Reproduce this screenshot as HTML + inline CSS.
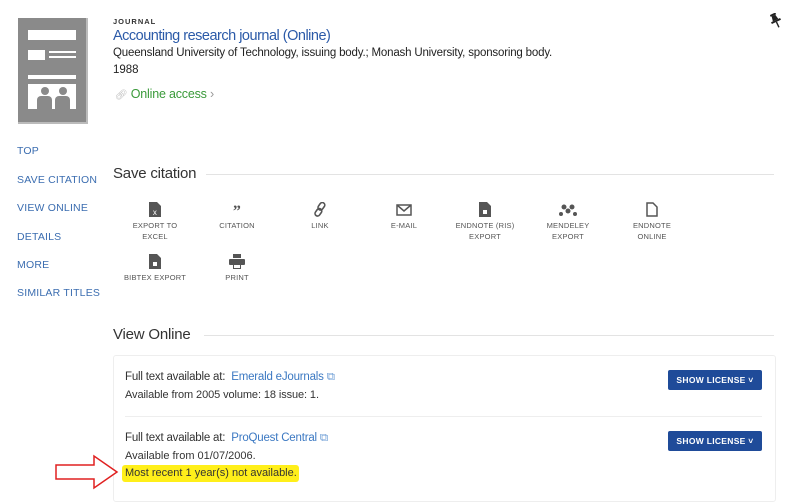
<!DOCTYPE html><html><head><style>
body{margin:0;width:800px;height:493px;background:#fff;font-family:"Liberation Sans",sans-serif;position:relative;overflow:hidden;color:#333}
.a{position:absolute;white-space:nowrap}
.nav{left:17px;font-size:10.5px;color:#3b6db0;letter-spacing:.2px}
.ic{position:absolute;width:80px;text-align:center;font-size:7.5px;color:#555;line-height:11px;letter-spacing:.2px}
.ic svg{display:block;margin:0 auto 3px}
.btn{position:absolute;left:668px;width:94px;height:20px;background:#1f4b99;border-radius:2px;color:#fff;font-size:8.5px;font-weight:bold;line-height:20px;text-align:center;letter-spacing:.3px}
</style></head><body>
<div class="a" style="left:18px;top:18px;width:68px;height:104px;background:#8a8a8a;border-right:2px solid #bbb;border-bottom:2px solid #bbb"></div>
<div class="a" style="left:28px;top:30px;width:48px;height:10px;background:#fff"></div>
<div class="a" style="left:28px;top:50px;width:17px;height:10px;background:#fff"></div>
<div class="a" style="left:49px;top:51px;width:27px;height:2px;background:#fff"></div>
<div class="a" style="left:49px;top:56px;width:27px;height:2px;background:#fff"></div>
<div class="a" style="left:28px;top:75px;width:48px;height:4px;background:#fff"></div>
<div class="a" style="left:28px;top:84px;width:48px;height:25px;background:#fff"></div>
<div class="a" style="left:41px;top:87px;width:8px;height:8px;border-radius:50%;background:#8a8a8a"></div>
<div class="a" style="left:37px;top:96px;width:15px;height:13px;border-radius:4px 4px 0 0;background:#8a8a8a"></div>
<div class="a" style="left:59px;top:87px;width:8px;height:8px;border-radius:50%;background:#8a8a8a"></div>
<div class="a" style="left:55px;top:96px;width:15px;height:13px;border-radius:4px 4px 0 0;background:#8a8a8a"></div>

<div class="a" style="left:113px;top:17px;font-size:7.5px;font-weight:bold;letter-spacing:1px;color:#333">JOURNAL</div>
<div class="a" style="left:113px;top:28px;font-size:14.5px;color:#2b5aa8;letter-spacing:-0.5px">Accounting research journal (Online)</div>
<div class="a" style="left:113px;top:47px;font-size:11.5px;color:#222;letter-spacing:-0.18px">Queensland University of Technology, issuing body.; Monash University, sponsoring body.</div>
<div class="a" style="left:113px;top:64px;font-size:11.5px;color:#222">1988</div>
<div class="a" style="left:115px;top:87px;font-size:12.5px;color:#3a9a3a;letter-spacing:-0.2px"><span style="color:#bbb;font-size:10px">&#x1F517;&#xFE0E;</span> Online access <span style="color:#999">›</span></div>
<svg class="a" style="left:770px;top:13px" width="12" height="16"><g fill="#222" transform="rotate(-25 6 8)"><rect x="3" y="0" width="6" height="2"/><path d="M4 2h4l1 5H3z"/><rect x="1" y="7" width="10" height="2"/><rect x="5.3" y="9" width="1.4" height="6"/></g></svg>

<div class="a nav" style="top:145px">TOP</div>
<div class="a nav" style="top:174px">SAVE CITATION</div>
<div class="a nav" style="top:202px">VIEW ONLINE</div>
<div class="a nav" style="top:231px">DETAILS</div>
<div class="a nav" style="top:259px">MORE</div>
<div class="a nav" style="top:287px">SIMILAR TITLES</div>

<div class="a" style="left:113px;top:165px;font-size:15px;color:#333;letter-spacing:-0.2px">Save citation</div>
<div class="a" style="left:206px;top:174px;width:568px;height:1px;background:#e3e3e3"></div>

<div class="ic" style="left:115px;top:202px"><svg width="12" height="15"><path d="M0 0h8l4 4v11H0z" fill="#555"/><text x="6" y="13" font-size="8" fill="#fff" text-anchor="middle" font-family="Liberation Sans">x</text></svg>EXPORT TO<br>EXCEL</div>
<div class="ic" style="left:197px;top:202px"><svg width="14" height="15"><text x="7" y="14" font-size="16" font-weight="bold" fill="#555" text-anchor="middle" font-family="Liberation Serif">”</text></svg>CITATION</div>
<div class="ic" style="left:280px;top:202px"><svg width="14" height="15"><g fill="none" stroke="#555" stroke-width="1.6"><rect x="6" y="0" width="5" height="8" rx="2.5" transform="rotate(35 8 4)"/><rect x="3" y="6" width="5" height="8" rx="2.5" transform="rotate(35 5 10)"/></g></svg>LINK</div>
<div class="ic" style="left:364px;top:202px"><svg width="16" height="15"><rect x="1" y="3" width="14" height="10" fill="none" stroke="#555" stroke-width="1.5"/><path d="M1 3l7 6 7-6" fill="none" stroke="#555" stroke-width="1.5"/></svg>E-MAIL</div>
<div class="ic" style="left:445px;top:202px"><svg width="12" height="15"><path d="M0 0h8l4 4v11H0z" fill="#555"/><rect x="4" y="8" width="4" height="4" fill="#fff"/></svg>ENDNOTE (RIS)<br>EXPORT</div>
<div class="ic" style="left:528px;top:202px"><svg width="18" height="15"><g fill="#555"><circle cx="5" cy="5" r="2.5"/><circle cx="13" cy="5" r="2.5"/><circle cx="9" cy="9" r="2.5"/><circle cx="2" cy="12" r="2"/><circle cx="16" cy="12" r="2"/></g></svg>MENDELEY<br>EXPORT</div>
<div class="ic" style="left:612px;top:202px"><svg width="12" height="15"><path d="M1 1h6l4 4v9H1z" fill="none" stroke="#555" stroke-width="1.5"/></svg>ENDNOTE<br>ONLINE</div>
<div class="ic" style="left:115px;top:254px"><svg width="12" height="15"><path d="M0 0h8l4 4v11H0z" fill="#555"/><rect x="4" y="8" width="4" height="4" fill="#fff"/></svg>BIBTEX EXPORT</div>
<div class="ic" style="left:197px;top:254px"><svg width="16" height="15"><g fill="#555"><rect x="4" y="0" width="8" height="4"/><rect x="0" y="5" width="16" height="6" rx="1"/><rect x="4" y="10" width="8" height="5"/></g><rect x="5" y="11" width="6" height="3" fill="#fff"/></svg>PRINT</div>

<div class="a" style="left:113px;top:326px;font-size:15px;color:#333;letter-spacing:-0.2px">View Online</div>
<div class="a" style="left:204px;top:335px;width:570px;height:1px;background:#e3e3e3"></div>

<div class="a" style="left:113px;top:355px;width:661px;height:145px;border:1px solid #eee;border-radius:3px"></div>
<div class="a" style="left:125px;top:371px;font-size:11.5px;color:#333;letter-spacing:-0.2px">Full text available at: &nbsp;<span style="color:#3b78c2">Emerald eJournals</span> <span style="color:#6a9bd4">⧉</span></div>
<div class="a" style="left:125px;top:389px;font-size:11px;color:#333;letter-spacing:-0.1px">Available from 2005 volume: 18 issue: 1.</div>
<div class="btn" style="top:370px">SHOW LICENSE ˅</div>
<div class="a" style="left:125px;top:416px;width:637px;height:1px;background:#eee"></div>
<div class="a" style="left:125px;top:432px;font-size:11.5px;color:#333;letter-spacing:-0.2px">Full text available at: &nbsp;<span style="color:#3b78c2">ProQuest Central</span> <span style="color:#6a9bd4">⧉</span></div>
<div class="a" style="left:125px;top:450px;font-size:11px;color:#333">Available from 01/07/2006.</div>
<div class="a" style="left:122px;top:465px;width:177px;height:17px;background:#ffef1a;border-radius:3px"></div>
<div class="a" style="left:125px;top:467px;font-size:11px;color:#333">Most recent 1 year(s) not available.</div>
<div class="btn" style="top:431px">SHOW LICENSE ˅</div>
<svg class="a" style="left:54px;top:454px" width="66" height="36"><path d="M2 11h38V2l23 16-23 16v-9H2z" fill="#fff" stroke="#e02020" stroke-width="1.5"/></svg>
</body></html>
